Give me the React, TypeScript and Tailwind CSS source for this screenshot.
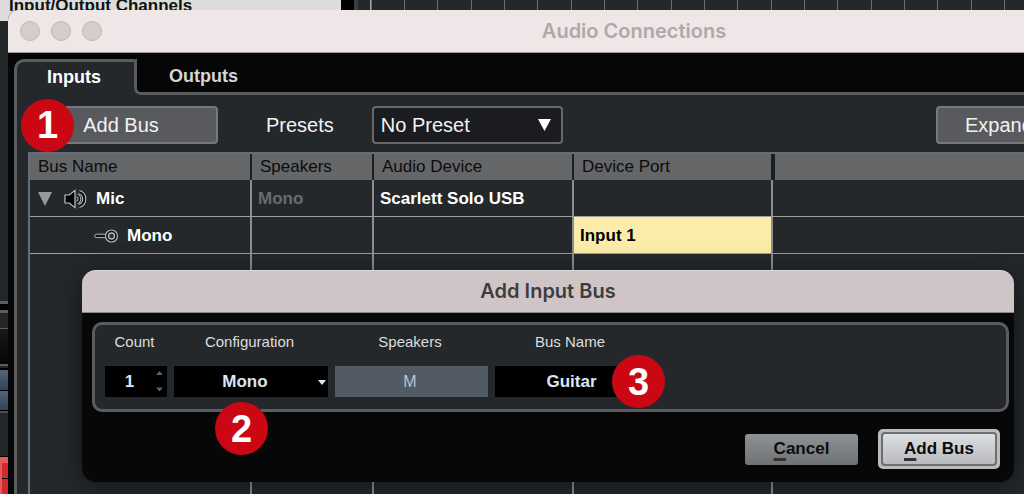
import { useState } from "react";

const ticks = Array.from({ length: 20 }, (_, i) => i);

function StepBadge({ n, className }: { n: number; className: string }) {
  return (
    <span
      className={`absolute z-10 flex h-[53px] w-[53px] items-center justify-center
                  rounded-full bg-[#cb0714] text-[38px] font-bold text-white ${className}`}
    >
      {n}
    </span>
  );
}

function SpeakerIcon() {
  return (
    <svg width="26" height="20" viewBox="0 0 26 20" fill="none" aria-hidden="true">
      <path d="M15 3a7.300 7.300 0 0 1 0 14" stroke="#b4b6b8" strokeWidth="4.200" />
      <path d="M15 3a7.300 7.300 0 0 1 0 14" stroke="#0c0c0c" strokeWidth="2" />
      <path d="M13 6.600a3.600 3.600 0 0 1 0 6.800" stroke="#b4b6b8" strokeWidth="3.600" />
      <path d="M13 6.600a3.600 3.600 0 0 1 0 6.800" stroke="#0c0c0c" strokeWidth="1.600" />
      <path
        d="M1 6h4.200L11 1.400v17.200L5.200 14H1z"
        fill="#000"
        stroke="#c2c4c6"
        strokeWidth="1.200"
      />
    </svg>
  );
}

function JackIcon() {
  return (
    <svg width="25" height="14" viewBox="0 0 25 14" fill="none" aria-hidden="true">
      <rect x="0.7" y="5.2" width="13" height="3.4" rx="1.7" fill="#111" stroke="#b4b6b8" />
      <circle cx="17.5" cy="7" r="6" fill="#111" stroke="#b4b6b8" strokeWidth="1.2" />
      <circle cx="17.5" cy="7" r="3" fill="#2b2f32" stroke="#b4b6b8" strokeWidth="1.4" />
    </svg>
  );
}

function MixerStrip() {
  return (
    <div className="flex h-full w-2 flex-col bg-[#23272a]">
      <div className="h-[21px] border-b border-[#8a8c8e] bg-[#d8d8d8]" />
      <div className="h-[283px] border-b-[3px] border-[#5d5e61]" />
      <div className="h-[6px] bg-black" />
      <div className="h-[19px] border-t-[3px] border-b border-t-[#5d5e61] border-b-[#5d5e61]" />
      <div className="h-[35px] bg-gradient-to-b from-[#17191a] to-[#060707]" />
      <div className="h-[6px] border-y-2 border-t-[#5d5e61] border-b-black" />
      <div className="h-[21px] border-b border-black bg-gradient-to-b from-[#566475] to-[#30445a]" />
      <div className="h-[20px] border-b border-black bg-gradient-to-b from-[#566475] to-[#30445a]" />
      <div className="h-[46px] border-t-2 border-b border-t-[#4b4d50] border-b-black" />
      <div className="flex-1 border-l-2 border-t-[6px] border-[#e25a5c] bg-[#cf2b30]">
        <div className="h-[16px] border-b border-black" />
      </div>
    </div>
  );
}

function Ruler() {
  return (
    <div className="absolute inset-x-0 top-0 flex h-[21px] overflow-hidden bg-[#24282b]">
      <div className="w-[341px] shrink-0 bg-[#dcdcdc] pl-[9px]">
        <p className="-mt-1 whitespace-nowrap text-[17px] font-bold leading-5 text-[#111]">
          Input/Output Channels
        </p>
      </div>
      <div className="w-[13px] shrink-0 bg-black" />
      <div className="w-[17px] shrink-0 border-l-4 border-r border-l-[#3a3e41] border-r-[#a5a7a8]" />
      {ticks.map((i) => (
        <div
          key={i}
          className={`shrink-0 border-l border-[#6d7072] ${i % 3 === 2 ? "w-[34px]" : "w-[33px]"}`}
        />
      ))}
    </div>
  );
}

function BusTable() {
  const th = "h-[26px] border-r-2 border-[#1c1f21] bg-[#656668] p-0 pl-[8px] text-left font-normal text-[#0c0c0c]";
  const td = "h-[37px] border-b border-r-2 border-b-[#9c9ea0] border-r-[#8c8e90] p-0 pl-[6px] pt-[2px]";
  const rest = "border-r-2 border-[#8c8e90] p-0";
  const last = "h-[37px] border-b border-[#9c9ea0] p-0";

  return (
    <table className="h-full w-full table-fixed border-separate border-spacing-0 text-[17px] leading-5">
      <colgroup>
        <col className="w-[222px]" />
        <col className="w-[122px]" />
        <col className="w-[200px]" />
        <col className="w-[199px]" />
        <col />
      </colgroup>
      <thead>
        <tr>
          <th className={th}>Bus Name</th>
          <th className={th}>Speakers</th>
          <th className={th}>Audio Device</th>
          <th className={th}>Device Port</th>
          <th className="border-l-2 border-[#1c1f21] bg-[#656668] p-0" />
        </tr>
      </thead>
      <tbody className="font-bold text-white">
        <tr>
          <td className={td}>
            <div className="flex items-center pl-[2px]">
              <svg width="14" height="14" viewBox="0 0 14 14" aria-hidden="true">
                <path d="M0 0h14L7 14z" fill="#97999b" />
              </svg>
              <span className="ml-3 mr-1.5">
                <SpeakerIcon />
              </span>
              Mic
            </div>
          </td>
          <td className={`${td} text-[#6a6c6e]`}>Mono</td>
          <td className={td}>Scarlett Solo USB</td>
          <td className={td} />
          <td className={last} />
        </tr>
        <tr>
          <td className={td}>
            <div className="flex items-center gap-2 pl-[58px]">
              <JackIcon />
              Mono
            </div>
          </td>
          <td className={td} />
          <td className={td} />
          <td className={`${td} bg-[#fcecaa] text-black`}>Input 1</td>
          <td className={last} />
        </tr>
        <tr>
          <td className={rest} />
          <td className={rest} />
          <td className={rest} />
          <td className={rest} />
          <td className="p-0" />
        </tr>
      </tbody>
    </table>
  );
}

function ConnectionsWindow() {
  const [preset, setPreset] = useState("No Preset");

  return (
    <section className="absolute -right-[236px] bottom-0 left-2 top-[10px] flex flex-col rounded-tl-[10px] bg-[#060606]">
      <header className="relative flex h-[43px] shrink-0 items-center justify-center rounded-tl-[10px] border-b border-[#a09b9b] bg-[#efe7e7]">
        <div className="absolute left-3 flex gap-[11px]">
          <span className="h-5 w-5 rounded-full border border-[#bfb6b6] bg-[#d5cccc]" />
          <span className="h-5 w-5 rounded-full border border-[#bfb6b6] bg-[#d5cccc]" />
          <span className="h-5 w-5 rounded-full border border-[#bfb6b6] bg-[#d5cccc]" />
        </div>
        <h1 className="font-['Inter',sans-serif] text-[20px] font-semibold text-[#b0a8a8]">
          Audio Connections
        </h1>
      </header>

      <div className="flex flex-1 flex-col pl-[6px] pt-[6px]">
        {/* Tabs */}
        <div className="flex h-9 shrink-0 text-[18px] font-bold">
          <button className="w-[120px] rounded-tl-[10px] border-l-[3px] border-t-[3px] border-[#5b5c60] bg-[#24282b] pr-[3px] pb-[3px] text-white">
            Inputs
          </button>
          <div className="flex-1 rounded-tr-[3px] bg-[#24282b]">
            <div className="h-full rounded-bl-[7px] rounded-tl-[2px] border-b-[3px] border-l-[3px] border-[#5b5c60] bg-[#060606] pl-8">
              <button className="h-full pt-[2px] text-[#d6d6d6]">Outputs</button>
            </div>
          </div>
        </div>

        <div className="flex flex-1 flex-col border-l-[3px] border-[#5b5c60] bg-[#24282b] pl-[11px] pt-[11px]">
          {/* Toolbar */}
          <div className="relative flex h-[38px] items-center text-[20px] text-[#f2f2f2]">
            <StepBadge n={1} className="-left-[7px] -top-[7px]" />
            <button className="h-full w-[190px] rounded-[4px] border-2 border-[#77787b] bg-[#595a5d] pr-[4px]">
              Add Bus
            </button>
            <label htmlFor="preset" className="ml-12">
              Presets
            </label>
            <div className="relative ml-[38px] h-full w-[191px]">
              <select
                id="preset"
                value={preset}
                onChange={(e) => setPreset(e.target.value)}
                className="h-full w-full appearance-none rounded-[4px] border-2 border-[#67686c] bg-[#1b1c20] pl-[7px]"
              >
                <option>No Preset</option>
              </select>
              <svg
                className="pointer-events-none absolute right-3 top-[13px]"
                width="13"
                height="12"
                viewBox="0 0 13 12"
                aria-hidden="true"
              >
                <path d="M0 0h13L6.5 12z" fill="#fff" />
              </svg>
            </div>
            <button className="ml-auto mr-32 h-full w-[196px] rounded-[4px] border-2 border-[#77787b] bg-[#595a5d] pl-[27px] text-left">
              Expand
            </button>
          </div>

          <div className="mt-2 flex-1 border-l-2 border-t-2 border-[#5f6e7d]">
            <BusTable />
          </div>
        </div>
      </div>
    </section>
  );
}

function AddBusDialog() {
  const [count, setCount] = useState("1");
  const [config, setConfig] = useState("Mono");
  const [name, setName] = useState("Guitar");
  const field = "h-[31px] w-full text-center text-[17px] font-bold";

  return (
    <section
      role="dialog"
      className="absolute left-[82px] right-[10px] top-[270px] rounded-[14px] bg-[#070707] shadow-[0_4px_28px_rgba(0,0,0,0.45)]"
    >
      <header className="flex h-[43px] items-center justify-center rounded-t-[14px] border-b border-t border-b-[#8f8989] border-t-[#e3dada] bg-[#cfc5c6] pb-[2px]">
        <h2 className="font-['Inter',sans-serif] text-[20px] font-semibold text-[#3f3c3d]">
          Add Input Bus
        </h2>
      </header>

      <div className="px-[10px] pb-[13px] pt-[9px]">
        <div className="relative mr-[-5px] flex h-[90px] gap-[7px] rounded-[10px] border-[3px] border-[#5b5b60] bg-[#24282b] px-[10px] pt-[7px] text-[15px] leading-5 text-[#dedede]">
          <div className="w-[62px]">
            <label htmlFor="count" className="block pb-[14px] pr-[3px] text-center">
              Count
            </label>
            <div className="relative">
              <input
                id="count"
                value={count}
                onChange={(e) => setCount(e.target.value)}
                className={`${field} bg-black pr-[13px] text-[#dbe6f5]`}
              />
              <svg
                className="absolute right-1 top-[5px]"
                width="7"
                height="21"
                viewBox="0 0 7 21"
                aria-hidden="true"
              >
                <path d="M0 4L3.5 0 7 4zM0 16.500L3.500 20.500 7 16.500z" fill="#4d6472" />
              </svg>
            </div>
          </div>

          <div className="relative w-[154px]">
            <label htmlFor="config" className="block pb-[14px] pr-[3px] text-center">
              Configuration
            </label>
            <div className="relative">
              <select
                id="config"
                value={config}
                onChange={(e) => setConfig(e.target.value)}
                className={`${field} appearance-none bg-black pr-[12px] text-[#dbe6f5]`}
              >
                <option>Mono</option>
              </select>
              <svg
                className="pointer-events-none absolute right-[2px] top-[14px]"
                width="8"
                height="5"
                viewBox="0 0 8 5"
                aria-hidden="true"
              >
                <path d="M0 0h8L4 5z" fill="#dbe6f5" />
              </svg>
            </div>
            <StepBadge n={2} className="left-[41px] top-[70px]" />
          </div>

          <div className="w-[153px]">
            <label htmlFor="speakers" className="block pb-[14px] pr-[3px] text-center">
              Speakers
            </label>
            <input
              id="speakers"
              value="M"
              readOnly
              className="h-[31px] w-full bg-[#525b65] pr-[3px] text-center text-[16px] text-[#b4c3d6]"
            />
          </div>

          <div className="relative w-[153px]">
            <label htmlFor="busname" className="block pb-[14px] pr-[3px] text-center">
              Bus Name
            </label>
            <input
              id="busname"
              value={name}
              onChange={(e) => setName(e.target.value)}
              className={`${field} bg-black text-[#dbe6f5]`}
            />
            <StepBadge n={3} className="left-[117px] top-[23px]" />
          </div>
        </div>

        <div className="mt-[17px] flex items-center justify-end gap-5 pr-1 text-[17px] font-bold text-[#0c0c0c]">
          <button className="h-[31px] w-[113px] rounded-[3px] bg-gradient-to-b from-[#8f9294] to-[#6f7275]">
            <span className="underline decoration-[#333] decoration-[3px] underline-offset-4">C</span>ancel
          </button>
          <button className="h-10 w-[122px] rounded-[5px] border-[3px] border-[#bdbdbf] bg-[#bdbdbf]">
            <span className="flex h-full items-center justify-center rounded-[4px] border-2 border-[#6d6e70] bg-gradient-to-b from-[#dcdfe3] to-[#b9babd]">
              <span className="underline decoration-[#333] decoration-[3px] underline-offset-4">A</span>dd&nbsp;Bus
            </span>
          </button>
        </div>
      </div>
    </section>
  );
}

export default function App() {
  return (
    <main className="relative h-screen overflow-hidden bg-[#24282b] font-['Liberation_Sans',Arial,sans-serif]">
      <MixerStrip />
      <Ruler />
      <ConnectionsWindow />
      <AddBusDialog />
    </main>
  );
}
